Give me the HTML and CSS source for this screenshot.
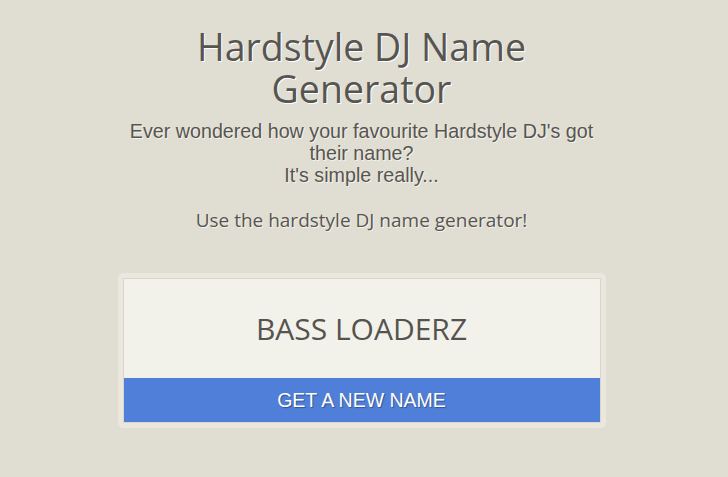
FILE: index.html
```html
<!DOCTYPE html>
<html lang="en">
<head>
<meta charset="utf-8">
<title>Hardstyle DJ Name Generator</title>
<link rel="stylesheet" href="styles.css">
</head>
<body>
<main class="page">
  <h1 class="title">Hardstyle DJ Name Generator</h1>
  <p class="intro">Ever wondered how your favourite Hardstyle DJ's got their name?<br>It's simple really...</p>
  <p class="cta">Use the hardstyle DJ name generator!</p>
  <section class="card">
    <div class="card-inner">
      <div class="dj-name">BASS LOADERZ</div>
      <button class="new-name" type="button">GET A NEW NAME</button>
    </div>
  </section>
</main>
</body>
</html>
```

FILE: styles.css
```css
html, body {
  margin: 0;
  padding: 0;
}
body {
  background: #e0ddd2;
  color: #575551;
  padding-right: 5px;
}
.page {
  width: 488px;
  margin: 0 auto;
  text-align: center;
  padding-top: 26px;
}
.title {
  font-family: "Open Sans", "DejaVu Sans", sans-serif;
  font-weight: 400;
  font-size: 37.5px;
  line-height: 42px;
  margin: 0;
  text-shadow: 1px 1px 0 #ffffff;
}
.intro {
  font-family: "Liberation Sans", Arial, sans-serif;
  font-size: 19.7px;
  line-height: 22px;
  margin: 10px 0 0;
  text-shadow: 1px 1px 0 #f4f2ec;
}
.cta {
  font-family: "Open Sans", "DejaVu Sans", sans-serif;
  font-size: 19px;
  line-height: 22px;
  margin: 23px 0 0;
  text-shadow: 1px 1px 0 #f4f2ec;
}
.card {
  margin-top: 42px;
  padding: 5px;
  background: #e9e7de;
  border-radius: 5px;
}
.card-inner {
  border: 1px solid #d9d6cb;
  background: #f2f1ea;
  display: flex;
  flex-direction: column;
}
.dj-name {
  font-family: "Open Sans", "DejaVu Sans", sans-serif;
  font-size: 30px;
  line-height: 99px;
  color: #55534f;
}
.new-name {
  display: block;
  width: 100%;
  height: 44px;
  border: 0;
  margin: 0;
  padding: 0;
  background: #4f7fd9;
  color: #ffffff;
  font-family: "Liberation Sans", Arial, sans-serif;
  font-size: 19.5px;
  line-height: 44px;
  text-shadow: 1px 1px 1px rgba(0, 0, 0, 0.35);
  cursor: pointer;
}
```
